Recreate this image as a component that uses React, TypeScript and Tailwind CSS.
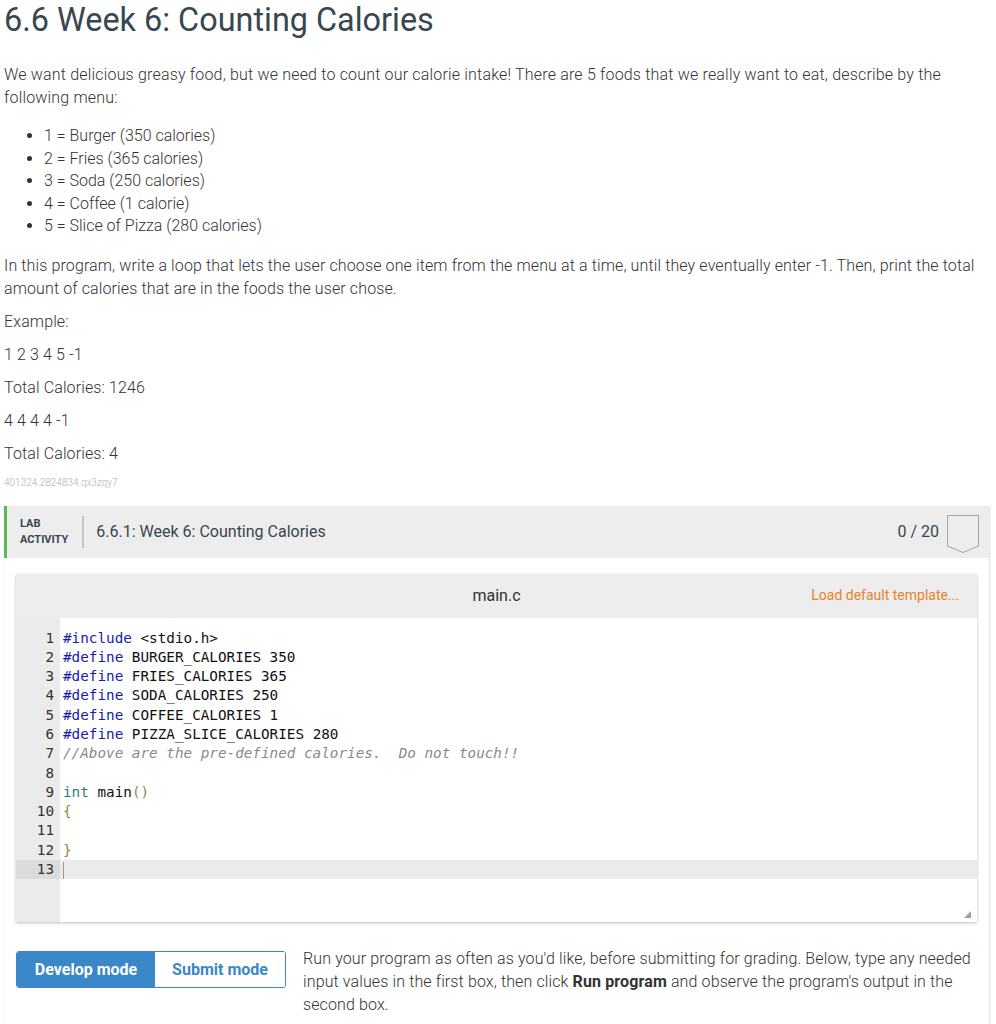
const menu = [
  "1 = Burger (350 calories)",
  "2 = Fries (365 calories)",
  "3 = Soda (250 calories)",
  "4 = Coffee (1 calorie)",
  "5 = Slice of Pizza (280 calories)",
];

function Kw({ children }: { children: React.ReactNode }) {
  return <span className="text-[#1a1ab0]">{children}</span>;
}

const code: React.ReactNode[] = [
  <><Kw>#include</Kw> &lt;stdio.h&gt;</>,
  <><Kw>#define</Kw> BURGER_CALORIES 350</>,
  <><Kw>#define</Kw> FRIES_CALORIES 365</>,
  <><Kw>#define</Kw> SODA_CALORIES 250</>,
  <><Kw>#define</Kw> COFFEE_CALORIES 1</>,
  <><Kw>#define</Kw> PIZZA_SLICE_CALORIES 280</>,
  <span className="italic text-[#8a8a8a]">//Above are the pre-defined calories.  Do not touch!!</span>,
  " ",
  <><span className="text-[#2a7f7f]">int</span> main<span className="text-[#8a8a3a]">()</span></>,
  <span className="text-[#8a8a3a]">{"{"}</span>,
  " ",
  <span className="text-[#8a8a3a]">{"}"}</span>,
  <span className="inline-block w-px h-[17px] bg-[#999] align-middle" />,
];

function Badge() {
  return (
    <svg width="34" height="40" viewBox="0 0 34 40">
      <path d="M1.5 1.5 H32.5 V32 L17 38.5 L1.5 32 Z" fill="none" stroke="#a3a3a3" strokeWidth="1" />
    </svg>
  );
}

export default function App() {
  return (
    <div className="bg-white min-h-[1024px] pl-[4px] pr-[6px] font-['Roboto',sans-serif] text-[#333]">
      <h1 className="text-[32.4px] leading-[40px] font-normal text-[#37474f] mb-[23px]">
        6.6 Week 6: Counting Calories
      </h1>
      <div className="text-[16px] leading-[23px] font-light text-[#333] tracking-[0.12px]">
        <p className="mb-[16px] tracking-[0.18px]">
          We want delicious greasy food, but we need to count our calorie intake! There are 5 foods that we really want to eat, describe by the following menu:
        </p>
        <ul className="list-disc pl-[40px] mb-[16px] leading-[22.5px] tracking-normal">
          {menu.map((m) => (
            <li key={m}>{m}</li>
          ))}
        </ul>
        <p className="mb-[10px]">
          In this program, write a loop that lets the user choose one item from the menu at a time, until they eventually enter -1. Then, print the total amount of calories that are in the foods the user chose.
        </p>
        <p className="mb-[10px]">Example:</p>
        <p className="mb-[10px]">1 2 3 4 5 -1</p>
        <p className="mb-[10px]">Total Calories: 1246</p>
        <p className="mb-[10px]">4 4 4 4 -1</p>
        <p className="mb-[11px]">Total Calories: 4</p>
        <p className="text-[10px] leading-[14px] text-[#b0b0b0] mb-[16px] tracking-normal">401324.2824834.qx3zqy7</p>
      </div>

      <div className="border-r border-[#e6e6e6] shadow-[0_0_2px_rgba(0,0,0,0.08)]">
        <div className="flex items-center h-[52px] bg-[#ededed] border-l-[3px] border-[#5cb85c]">
          <div className="pl-[13px] pr-[14px] text-[11px] leading-[16px] font-bold text-[#37474f]">
            <div>LAB</div>
            <div>ACTIVITY</div>
          </div>
          <div className="w-[2px] h-[32px] bg-[#c4c4c4]" />
          <div className="pl-[12px] flex-1 text-[16px] text-[#37474f]">6.6.1: Week 6: Counting Calories</div>
          <div className="text-[16px] text-[#37474f] mr-[7px]">0 / 20</div>
          <div className="mr-[9px] mt-[4px]">
            <Badge />
          </div>
        </div>

        <div className="px-[12px] pt-[16px] pb-[28px]">
          <div className="shadow-[0_1px_3px_rgba(0,0,0,0.25)]">
            <div className="relative h-[44px] bg-[#ededed] flex items-center justify-center">
              <span className="text-[16px] text-[#333] font-normal">main.c</span>
              <span className="absolute right-[18px] text-[14px] text-[#e8832a]">Load default template...</span>
            </div>
            <div className="relative flex bg-white font-['DejaVu_Sans_Mono',monospace] text-[14.3px] leading-[19.3px] text-[#111]">
              <div className="w-[44px] bg-[#ebebeb] pt-[11px] pb-[43px]">
                {code.map((_, i) => (
                  <div
                    key={i}
                    className={i === 12 ? "bg-[#dcdcdc] text-right pr-[6px] text-[#333] h-[19.3px]" : "text-right pr-[6px] text-[#333] h-[19.3px]"}
                  >
                    {i + 1}
                  </div>
                ))}
              </div>
              <div className="flex-1 pt-[11px] pb-[43px] whitespace-pre">
                {code.map((c, i) => (
                  <div key={i} className={i === 12 ? "bg-[#ebebeb] pl-[3px] h-[19.3px]" : "pl-[3px] h-[19.3px]"}>
                    {c}
                  </div>
                ))}
              </div>
              <svg className="absolute right-[6px] bottom-[4px]" width="8" height="8" viewBox="0 0 8 8">
                <path d="M8 1 L8 8 L1 8 Z" fill="#a0a0a0" />
              </svg>
            </div>
          </div>

          <div className="flex items-start mt-[25px] gap-[17px]">
            <div className="flex mt-[4px] rounded-[3px] border border-[#3a87c9] overflow-hidden text-[16px] font-bold">
              <div className="bg-[#3a87c9] text-white w-[138px] h-[35px] flex items-center justify-center">Develop mode</div>
              <div className="bg-white text-[#3a87c9] w-[130px] h-[35px] flex items-center justify-center">Submit mode</div>
            </div>
            <p className="flex-1 text-[16px] leading-[23px] font-light text-[#333] tracking-[0.12px]">
              Run your program as often as you'd like, before submitting for grading. Below, type any needed input values in the first box, then click <span className="font-bold">Run program</span> and observe the program's output in the second box.
            </p>
          </div>
        </div>
      </div>
    </div>
  );
}
